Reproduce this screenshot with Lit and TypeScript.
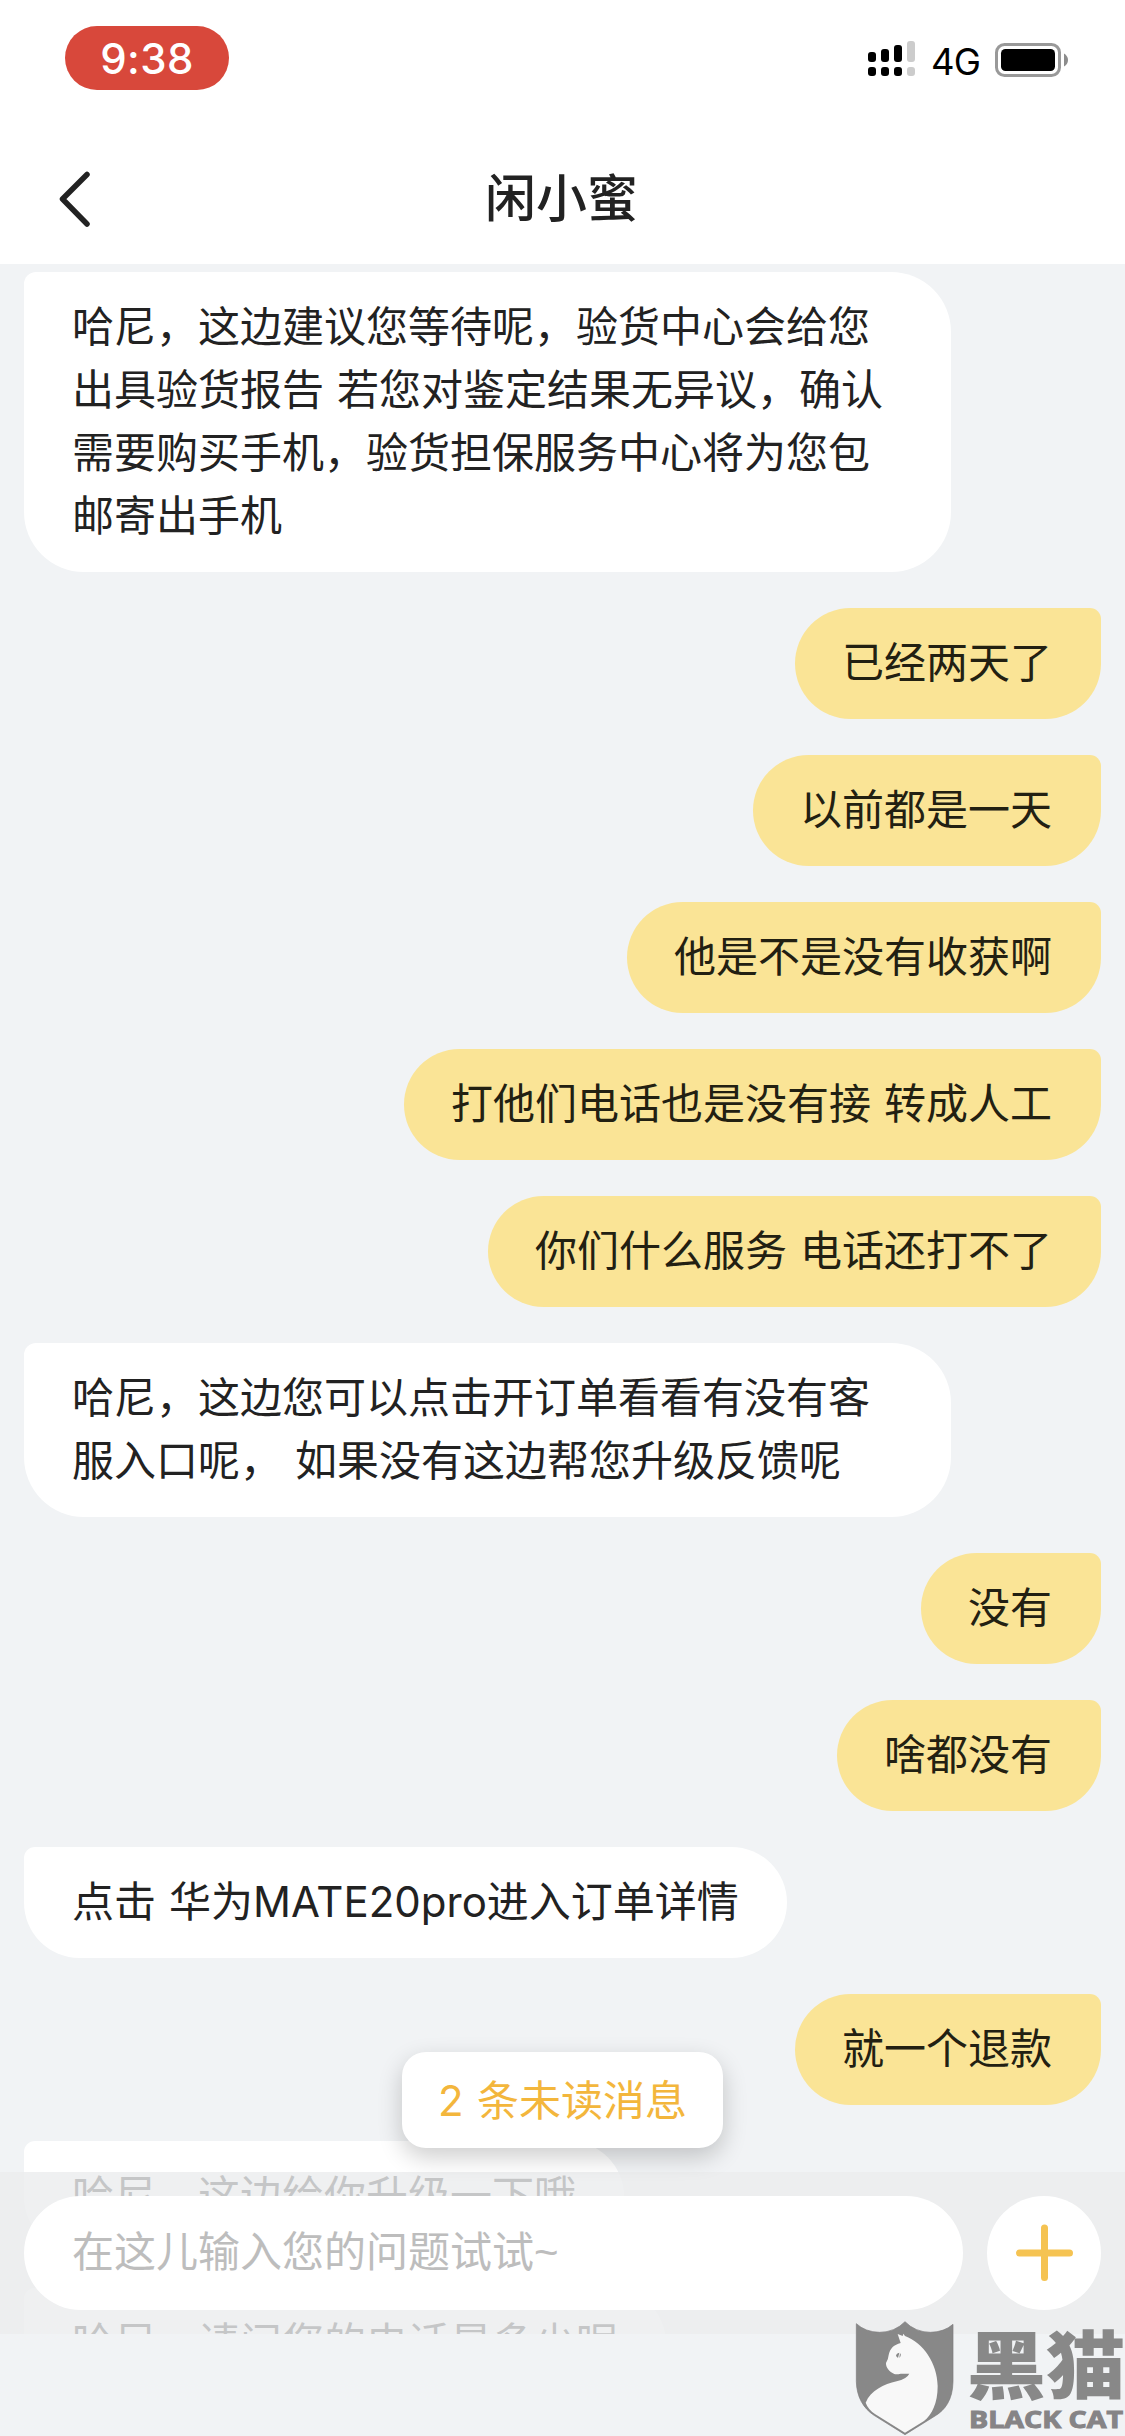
import { LitElement, html, css, svg } from "lit";
import { customElement, property } from "lit/decorators.js";
import { classMap } from "lit/directives/class-map.js";

interface Message {
  mine: boolean;
  text: string;
}

const MESSAGES: Message[] = [
  {
    mine: false,
    text: "哈尼，这边建议您等待呢，验货中心会给您\n出具验货报告 若您对鉴定结果无异议，确认\n需要购买手机，验货担保服务中心将为您包\n邮寄出手机",
  },
  { mine: true, text: "已经两天了" },
  { mine: true, text: "以前都是一天" },
  { mine: true, text: "他是不是没有收获啊" },
  { mine: true, text: "打他们电话也是没有接 转成人工" },
  { mine: true, text: "你们什么服务 电话还打不了" },
  {
    mine: false,
    text: "哈尼，这边您可以点击开订单看看有没有客\n服入口呢， 如果没有这边帮您升级反馈呢",
  },
  { mine: true, text: "没有" },
  { mine: true, text: "啥都没有" },
  { mine: false, text: "点击 华为MATE20pro进入订单详情" },
  { mine: true, text: "就一个退款" },
  { mine: false, text: "哈尼，这边给你升级一下哦" },
  { mine: false, text: "哈尼，请问您的电话是多少呢" },
];

/** Signal columns: left edge, top of the tall bar, whether the bar is lit. */
const SIGNAL: [number, number, boolean][] = [
  [0, 11, true],
  [13, 8, true],
  [26, 4, true],
  [39, 0, false],
];

@customElement("status-bar")
export class StatusBar extends LitElement {
  static styles = css`
    :host {
      display: flex;
      justify-content: space-between;
      align-items: flex-start;
      height: 116px;
      box-sizing: border-box;
      padding: 26px 56px 0 65px;
      font-family: Inter, "Liberation Sans", sans-serif;
    }
    .time {
      display: flex;
      align-items: center;
      justify-content: center;
      width: 164px;
      height: 64px;
      border-radius: 32px;
      background: #d8483b;
      color: #fff;
      font-size: 42px;
      font-weight: 500;
      letter-spacing: 0.4px;
    }
    .right {
      display: flex;
      align-items: flex-start;
    }
    .signal {
      margin-top: 15px;
      width: 48px;
      height: 36px;
    }
    .net {
      margin: 14px 0 0 15px;
      width: 49px;
      font-size: 36.5px;
      line-height: 44px;
      letter-spacing: -0.8px;
      color: #000;
      white-space: nowrap;
    }
    .battery {
      margin: 17px 0 0 15px;
      width: 74px;
      height: 34px;
    }
  `;

  render() {
    return html`
      <div class="time">9:38</div>
      <div class="right">
        <svg class="signal" viewBox="0 0 48 36">
          ${SIGNAL.map(
            ([x, y, lit]) => svg`
              <g fill=${lit ? "#000" : "#ccc"}>
                <rect x=${x} y=${y} width="8" height=${21 - y} rx="3" />
                <rect x=${x} y="26" width="8" height="9" rx="3" />
              </g>`
          )}
        </svg>
        <span class="net">4G</span>
        <svg class="battery" viewBox="0 0 74 34">
          <rect x="1.5" y="1.5" width="63" height="31" rx="8" fill="none" stroke="#999" stroke-width="3" />
          <rect x="6" y="6" width="54" height="22" rx="4.5" fill="#000" />
          <path d="M69 10.5 Q73 13 73 17 Q73 21 69 23.5Z" fill="#8c8c8c" />
        </svg>
      </div>
    `;
  }
}

@customElement("nav-bar")
export class NavBar extends LitElement {
  @property() heading = "";

  static styles = css`
    :host {
      display: grid;
      grid-template-columns: 149px 1fr 151px;
      align-items: center;
      height: 148px;
      box-sizing: border-box;
      padding-top: 17px;
    }
    .back {
      width: 34px;
      height: 58px;
      margin-left: 57px;
      display: block;
    }
    .title {
      text-align: center;
      font-size: 51px;
      line-height: 60px;
      font-weight: 500;
      color: #222;
    }
  `;

  render() {
    return html`
      <svg class="back" viewBox="0 0 34 58">
        <path d="M30 4.5 L5.5 29 L30 54" fill="none" stroke="#222" stroke-width="5.5" stroke-linecap="round" stroke-linejoin="round" />
      </svg>
      <div class="title">${this.heading}</div>
    `;
  }
}

@customElement("chat-bubble")
export class ChatBubble extends LitElement {
  @property({ type: Boolean }) mine = false;
  @property() text = "";

  static styles = css`
    :host {
      display: flex;
    }
    .bubble {
      box-sizing: border-box;
      max-width: 927px;
      padding: 23px 48px 25px;
      background: #fff;
      border-radius: 12px 60px 60px 60px;
      color: #222;
      font-size: 42px;
      line-height: 63px;
      word-spacing: 1.2px;
      white-space: pre;
    }
    .wide {
      width: 927px;
    }
    .mine {
      margin-left: auto;
      padding-left: 47px;
      padding-right: 49px;
      background: #fae496;
      color: #222012;
      border-radius: 60px 12px 60px 60px;
    }
  `;

  render() {
    const wide = this.text.includes("\n");
    return html`<div class=${classMap({ bubble: true, mine: this.mine, wide })}>${this.text}</div>`;
  }
}

@customElement("message-composer")
export class MessageComposer extends LitElement {
  static styles = css`
    :host {
      display: flex;
      gap: 24px;
      padding: 24px;
      background: rgba(235, 236, 238, 0.81);
    }
    .field {
      flex: 1;
      height: 114px;
      box-sizing: border-box;
      padding: 0 48px;
      border-radius: 57px;
      background: #fff;
      color: #bdbdbd;
      font-family: "Liberation Sans", "Noto Sans CJK SC", sans-serif;
      font-size: 42px;
      line-height: 114px;
    }
    .add {
      width: 114px;
      height: 114px;
      border-radius: 50%;
      background: #fff;
    }
  `;

  render() {
    return html`
      <div class="field">在这儿输入您的问题试试~</div>
      <svg class="add" viewBox="0 0 114 114">
        <path d="M57.5 32 V81.5 M32.5 57 H82.5" stroke="#f5c352" stroke-width="7" stroke-linecap="round" />
      </svg>
    `;
  }
}

@customElement("brand-mark")
export class BrandMark extends LitElement {
  static styles = css`
    :host {
      display: block;
      width: 285px;
      height: 136px;
    }
    .mark {
      display: block;
      width: 285px;
      height: 136px;
    }
    .cn {
      font-family: "Noto Sans CJK SC", sans-serif;
      font-weight: 900;
      font-size: 220px;
    }
    .en {
      font-family: "Open Sans", "Liberation Sans", sans-serif;
      font-weight: 700;
      font-size: 69px;
    }
  `;

  render() {
    return html`
      <svg class="mark" viewBox="0 0 855 408">
        <path
          d="M49 71 Q76 96 119 97 Q165 96 195 65 Q225 96 271 97 Q313 96 339 73 V245 C338 300 315 330 285 348 L195 404 L102 346 C70 325 50 290 49 245Z"
          fill="#888" stroke="#7c7a7c" stroke-width="2" />
        <path
          d="M173 102 L188 108 L190 101 L195 108 C250 128 292 190 293 258 C293 310 276 344 252 363 L195 398 L106 343 Q84 328 77 308 C92 272 132 252 170 244 Q200 237 208 221 L182 221 Q170 224 163 222 C148 215 137 202 138 189 Q145 178 146 165 C150 145 162 134 182 129 Z"
          fill="#f8f8f8" />
        <path d="M168 168 Q168 160 178 158 L174 174Z M180 160 Q186 164 178 174 Z" fill="#888" />
        <text class="cn" x="380" y="279" textLength="476" lengthAdjust="spacingAndGlyphs" fill="#888">黑猫</text>
        <text class="en" x="387" y="385" textLength="462" lengthAdjust="spacingAndGlyphs" fill="#868486" stroke="#868486" stroke-width="3">BLACK CAT</text>
      </svg>
    `;
  }
}

@customElement("app-root")
export class AppRoot extends LitElement {
  static styles = css`
    :host {
      display: block;
      width: 1125px;
      height: 2436px;
      font-family: Inter, "Noto Sans CJK SC", sans-serif;
    }
    .screen {
      position: relative;
      display: flex;
      flex-direction: column;
      width: 1125px;
      height: 2436px;
      overflow: hidden;
      background: #f1f3f5;
    }
    .top {
      background: #fff;
      height: 264px;
    }
    .body {
      position: relative;
      height: 2070px;
      overflow: hidden;
    }
    .messages {
      display: flex;
      flex-direction: column;
      gap: 36px;
      padding: 8px 24px 0;
    }
    .unread {
      position: absolute;
      left: 402px;
      bottom: 186px;
      width: 321px;
      height: 96px;
      border-radius: 24px;
      background: #fff;
      box-shadow: 0 9px 24px rgba(0, 0, 0, 0.2);
      color: #f3b63c;
      font-size: 42px;
      line-height: 97px;
      word-spacing: 1.8px;
      text-align: center;
      white-space: nowrap;
    }
    .composer {
      position: absolute;
      left: 0;
      right: 0;
      bottom: 0;
    }
    .brand {
      position: absolute;
      right: 0;
      bottom: 0;
    }
  `;

  render() {
    return html`
      <div class="screen">
        <div class="top">
          <status-bar></status-bar>
          <nav-bar heading="闲小蜜"></nav-bar>
        </div>
        <div class="body">
          <div class="messages">
            ${MESSAGES.map(
              (m) => html`<chat-bubble ?mine=${m.mine} .text=${m.text}></chat-bubble>`
            )}
          </div>
          <message-composer class="composer"></message-composer>
          <div class="unread">2 条未读消息</div>
        </div>
        <brand-mark class="brand"></brand-mark>
      </div>
    `;
  }
}
